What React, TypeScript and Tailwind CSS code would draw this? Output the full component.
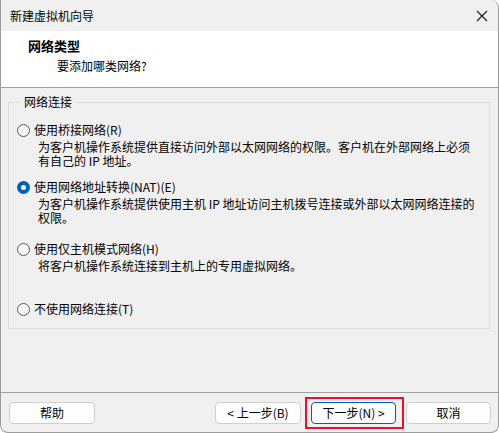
const FONT = { fontFamily: '"Noto Sans CJK SC", "Liberation Sans", sans-serif' };

type Option = {
    label: string;
    desc?: string;
    checked?: boolean;
    gap: string;
};

const OPTIONS: Option[] = [
    {
        label: '使用桥接网络(R)',
        desc: '为客户机操作系统提供直接访问外部以太网网络的权限。客户机在外部网络上必须\n有自己的 IP 地址。',
        gap: 'mt-0',
    },
    {
        label: '使用网络地址转换(NAT)(E)',
        desc: '为客户机操作系统提供使用主机 IP 地址访问主机拨号连接或外部以太网网络连接的\n权限。',
        checked: true,
        gap: 'mt-[11px]',
    },
    {
        label: '使用仅主机模式网络(H)',
        desc: '将客户机操作系统连接到主机上的专用虚拟网络。',
        gap: 'mt-[16px]',
    },
    {
        label: '不使用网络连接(T)',
        gap: 'mt-[28px]',
    },
];

function Radio({ checked }: { checked?: boolean }) {
    if (checked) {
        return (
            <span className="flex h-[13px] w-[13px] items-center justify-center rounded-full bg-[#005fb8]">
                <span className="h-[5px] w-[5px] rounded-full bg-white" />
            </span>
        );
    }
    return <span className="h-[13px] w-[13px] rounded-full border border-[#5a5a5a] bg-[#f7f7f7]" />;
}

function Button({ label, primary, className }: { label: string; primary?: boolean; className: string }) {
    return (
        <button
            type="button"
            className={
                'h-[22px] rounded-[4px] bg-[#fdfdfd] text-[12px] leading-[20px] text-black ' +
                (primary ? 'border border-[#005fb8] ' : 'border border-[#d0d0d0] ') +
                className
            }
        >
            {label}
        </button>
    );
}

export default function App() {
    return (
        <div
            style={FONT}
            className="relative flex h-[433px] w-[499px] flex-col overflow-hidden rounded-tr-[8px] rounded-b-[8px] border-x border-b border-[#9c9c9c] bg-[#f0f0f0] text-[12px] text-black"
        >
            {/* title bar */}
            <div className="flex h-[31px] shrink-0 items-center justify-between pl-[9px] pr-[9px]">
                <span className="leading-[16px]">新建虚拟机向导</span>
                <svg width="12" height="12" viewBox="0 0 12 12" className="mr-[1px]">
                    <path d="M1 1L11 11M11 1L1 11" stroke="#1a1a1a" strokeWidth="1.1" fill="none" />
                </svg>
            </div>

            {/* header */}
            <div className="h-[57px] shrink-0 border-b border-[#a0a0a0] bg-white">
                <div className="ml-[27px] mt-[7px] text-[13px] font-bold leading-[16px]">网络类型</div>
                <div className="ml-[56px] mt-[4px] leading-[16px]">要添加哪类网络?</div>
            </div>

            {/* body */}
            <div className="flex-1">
                <fieldset className="ml-[7px] mt-[6px] w-[482px] border border-[#dcdcdc] px-[8px] pb-[11px] pt-[12px]">
                    <legend className="ml-[4px] px-[3px] leading-[16px]">网络连接</legend>
                    {OPTIONS.map((o) => (
                        <div key={o.label} className={o.gap}>
                            <div className="flex h-[16px] items-center">
                                <Radio checked={o.checked} />
                                <span className="ml-[4px] leading-[16px]">{o.label}</span>
                            </div>
                            {o.desc && (
                                <p className="ml-[21px] mt-[2px] whitespace-pre leading-[14px]">{o.desc}</p>
                            )}
                        </div>
                    ))}
                </fieldset>
            </div>

            {/* footer */}
            <div className="flex h-[40px] shrink-0 items-start border-t border-[#a0a0a0] pt-[9px]">
                <Button label="帮助" className="ml-[8px] w-[86px]" />
                <div className="flex-1" />
                <Button label="< 上一步(B)" className="w-[86px]" />
                <Button label="下一步(N) >" primary className="ml-[10px] w-[85px]" />
                <Button label="取消" className="ml-[10px] mr-[7px] w-[85px]" />
            </div>

            {/* annotation */}
            <div className="absolute left-[304px] top-[397px] h-[32px] w-[99px] border-2 border-[#e8112d]" />
        </div>
    );
}
